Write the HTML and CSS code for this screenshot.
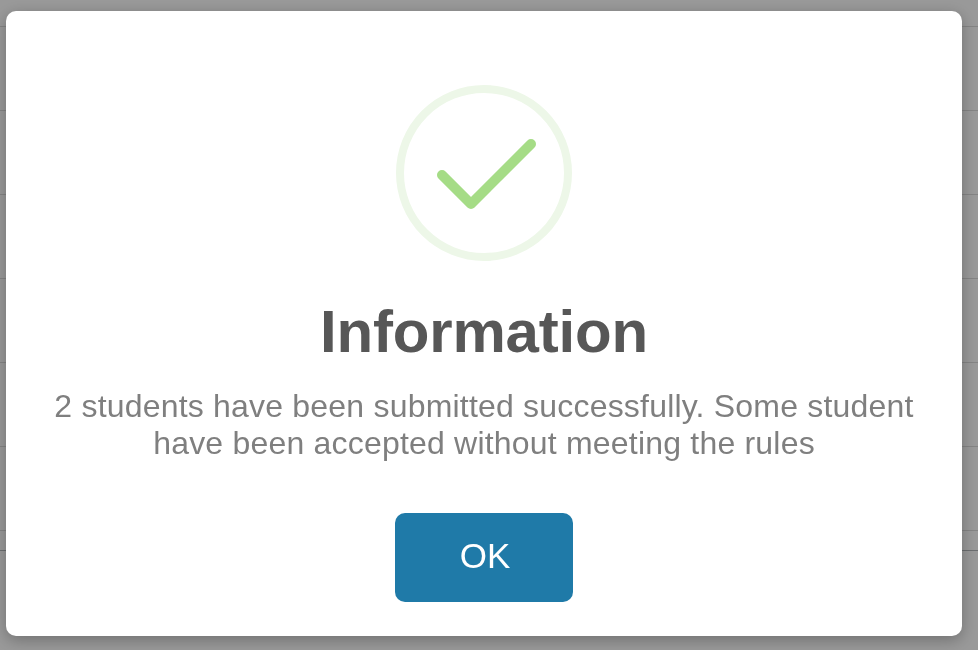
FILE: index.html
```html
<!DOCTYPE html>
<html lang="en">
<head>
  <meta charset="UTF-8">
  <meta name="viewport" content="width=device-width, initial-scale=1.0">
  <link rel="stylesheet" href="styles.css">
  <title>Information</title>
</head>
<body>
  <div class="table-behind">
    <div class="row"></div>
    <div class="row"></div>
    <div class="row"></div>
    <div class="row"></div>
    <div class="row"></div>
    <div class="row"></div>
    <div class="row"></div>
    <div class="row-last"></div>
  </div>

  <div class="overlay">
    <div class="modal">
      <svg class="success-icon" width="176" height="176" viewBox="0 0 176 176">
        <circle cx="88" cy="88" r="84" fill="none" stroke="#edf7e8" stroke-width="8"/>
        <path d="M46 90 L75 119 L135 59" fill="none" stroke="#a5dc86" stroke-width="10" stroke-linecap="round" stroke-linejoin="round"/>
      </svg>
      <h2 class="title">Information</h2>
      <p class="message">2 students have been submitted successfully. Some student have been accepted without meeting the rules</p>
      <button class="ok-button">OK</button>
    </div>
  </div>
</body>
</html>
```

FILE: styles.css
```css
body {
  margin: 0;
  height: 650px;
  overflow: hidden;
  font-family: "Liberation Sans", Arial, sans-serif;
  background-color: #ffffff;
}

.table-behind {
  padding-top: 26px;
}

.row {
  height: 83px;
  border-top: 1px solid #dcdcdc;
}

.row:nth-child(7) {
  height: 19px;
}

.row-last {
  height: 80px;
  border-top: 1px solid #b4b8bb;
}

.overlay {
  position: fixed;
  top: 0;
  left: 0;
  right: 0;
  bottom: 0;
  background-color: rgba(0, 0, 0, 0.4);
}

.modal {
  position: absolute;
  top: 11px;
  left: 6px;
  width: 956px;
  height: 625px;
  box-sizing: border-box;
  padding-top: 74px;
  display: flex;
  flex-direction: column;
  align-items: center;
  background-color: #ffffff;
  border-radius: 10px;
  box-shadow: 0 4px 16px rgba(0, 0, 0, 0.28);
}

.success-icon {
  display: block;
  margin-left: -1px;
}

.title {
  margin: 36px 0 0;
  font-size: 60px;
  line-height: 70px;
  font-weight: bold;
  letter-spacing: -0.2px;
  color: #575757;
}

.message {
  margin: 21px 0 0;
  width: 870px;
  font-size: 32px;
  line-height: 37px;
  font-weight: normal;
  letter-spacing: 0.2px;
  text-align: center;
  color: #7f7f7f;
}

.ok-button {
  margin-top: 51px;
  padding: 0 0 3px 2px;
  width: 178px;
  height: 89px;
  border: none;
  border-radius: 10px;
  background-color: #1f7aa8;
  color: #ffffff;
  font-family: inherit;
  font-size: 35px;
}
```
